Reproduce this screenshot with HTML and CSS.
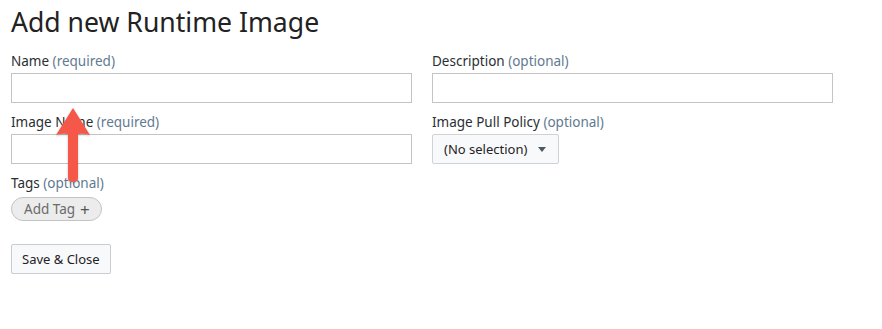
FILE: index.html
```html
<!DOCTYPE html>
<html>
<head>
<meta charset="utf-8">
<link rel="stylesheet" href="styles.css">
</head>
<body>
<div class="page">
  <h1 class="title">Add new Runtime Image</h1>
  <div class="grid">
    <div class="field">
      <label class="label">Name <span class="hint">(required)</span></label>
      <div class="input"></div>
    </div>
    <div class="field">
      <label class="label">Description <span class="hint">(optional)</span></label>
      <div class="input"></div>
    </div>
    <div class="field">
      <label class="label">Image Name <span class="hint">(required)</span></label>
      <div class="input"></div>
    </div>
    <div class="field">
      <label class="label">Image Pull Policy <span class="hint">(optional)</span></label>
      <div class="select">(No selection)<span class="caret"></span></div>
    </div>
    <div class="field">
      <label class="label">Tags <span class="hint">(optional)</span></label>
      <div class="tag-row"><span class="tag">Add Tag <span class="plus">+</span></span></div>
    </div>
  </div>
  <button class="save">Save &amp; Close</button>
  <svg class="arrow" width="40" height="80" viewBox="0 0 40 80">
    <defs>
      <filter id="sh" x="-30%" y="-30%" width="160%" height="160%">
        <feDropShadow dx="0" dy="1" stdDeviation="1" flood-color="#000" flood-opacity="0.25"/>
      </filter>
    </defs>
    <g filter="url(#sh)">
      <path d="M20 1 L37 28 Q31 26 25 27 L25 71 Q25 75 20 75 Q15 75 15 71 L15 27 Q9 26 3 28 Z" fill="#f5584a"/>
    </g>
  </svg>
</div>
</body>
</html>
```
FILE: styles.css
```css
html, body { margin: 0; padding: 0; background: #fff; }
body { font-family: "Noto Sans", "Open Sans", sans-serif; color: #1f2326; }
.page { position: relative; padding: 0 11px; }
.title { margin: 0; padding-top: 4px; font-size: 26.6px; font-weight: 400; line-height: 36px; color: #222; }
.grid { display: grid; grid-template-columns: 401px 401px; column-gap: 20px; margin-top: 11px; }
.field { display: flex; flex-direction: column; }
.label { font-size: 13.5px; line-height: 20px; height: 20px; color: #2a2e33; }
.hint { color: #5f7a91; }
.input { height: 28px; border: 1px solid #c4c4c4; background: #fff; margin-top: 2px; margin-bottom: 9px; }
.select { align-self: flex-start; height: 28px; border: 1px solid #cfd3d6; background: #f8f9fa; margin-top: 2px; padding: 0 12px 0 11px; font-size: 13px; line-height: 28px; color: #1f2326; display: flex; align-items: center; border-radius: 2px; }
.caret { display: inline-block; width: 0; height: 0; border-left: 4.5px solid transparent; border-right: 4.5px solid transparent; border-top: 5px solid #4a5a66; margin-left: 11px; }
.tag-row { margin-top: 4px; display: flex; }
.tag { display: inline-flex; align-items: center; height: 22px; padding: 0 11px 0 12px; border: 1px solid #c3c3c3; border-radius: 12px; background: #ececec; font-size: 13.5px; color: #6a6a6a; }
.plus { font-size: 17px; margin-left: 5px; color: #555; line-height: 1; }
.save { display: block; margin-top: 23px; height: 30px; padding: 0 10px; border: 1px solid #c9cdd1; border-radius: 2px; background: #f8f9fa; font-family: inherit; font-size: 13px; color: #1f2326; box-shadow: 0 1px 1px rgba(0,0,0,0.06); }
.arrow { position: absolute; left: 53px; top: 107px; }
```
